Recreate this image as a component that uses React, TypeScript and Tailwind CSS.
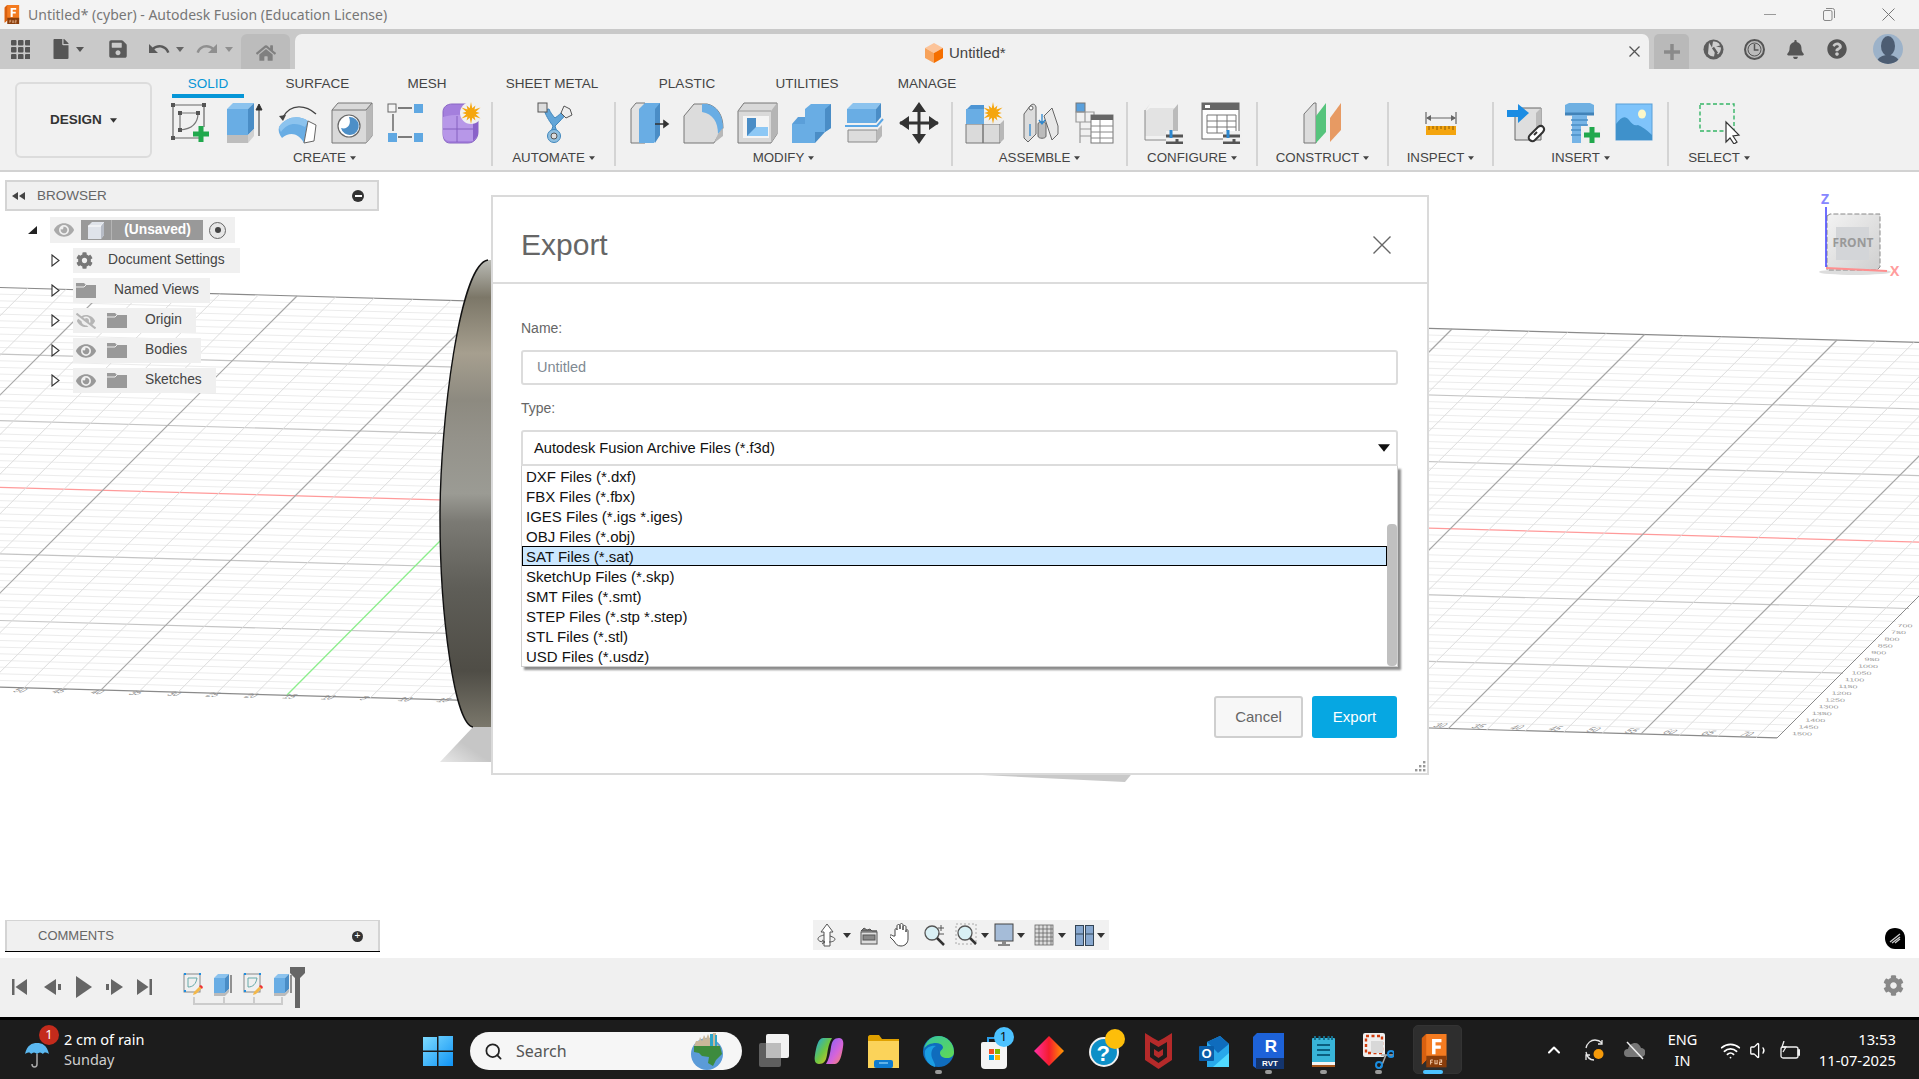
import { FaBell, FaCog, FaEye, FaEyeSlash, FaFile, FaHome, FaQuestionCircle, FaSave } from "react-icons/fa";
import { MdRedo, MdUndo } from "react-icons/md";
import { Search, Wifi, ChevronUp, Volume1 } from "lucide-react";
import type { ReactNode } from "react";

const Caret = ({ className = "" }: { className?: string }) => (
  <svg width="8" height="5" viewBox="0 0 8 5" className={className}>
    <path d="M0 0h8L4 5z" fill="currentColor" />
  </svg>
);

/* ---------- ribbon icons, all 44x42 ---------- */
const Ico = ({ children }: { children: ReactNode }) => (
  <svg width="44" height="42" viewBox="0 0 44 42">
    {children}
  </svg>
);

const Plus = ({ x, y }: { x: number; y: number }) => (
  <path d={`M${x} ${y - 8}v16M${x - 8} ${y}h16`} stroke="#21a84d" strokeWidth="5" fill="none" />
);

const SketchIcon = () => (
  <Ico>
    <path d="M5 3h31M5 3v33h26M36 3v22" stroke="#666" strokeWidth="1.2" fill="none" />
    <path d="M12 11h19M12 11v17M30 11c0 10-6 16-18 17" stroke="#777" strokeWidth="1.2" fill="none" />
    {[[3, 1], [34, 1], [3, 34], [10, 9], [10, 26], [28, 9]].map(([x, y]) => (
      <rect key={`${x}-${y}`} x={x} y={y} width="4" height="4" fill="#555" />
    ))}
    <Plus x={33} y={32} />
  </Ico>
);

const ExtrudeIcon = () => (
  <Ico>
    <path d="M5 7l6-6h21l-6 6z" fill="#8cc3ee" />
    <path d="M5 7h21v26H5z" fill="#69ade4" />
    <path d="M26 7l6-6v26l-6 6z" fill="#4a8dc6" />
    <path d="M5 33h21v8H5z" fill="#bdbdbd" />
    <path d="M26 33l6-6v7l-6 7z" fill="#d0d0d0" />
    <path d="M37 34V3M34 8l3-6 3 6z" stroke="#333" strokeWidth="1" fill="#333" />
  </Ico>
);

const RevolveIcon = () => (
  <Ico>
    <path d="M7 15C15 1 30 3 40 12" stroke="#444" strokeWidth="1.4" fill="none" />
    <path d="M3 14l7-1-3 6z" fill="#444" />
    <path d="M3 25c8-11 20-12 29-6l-4 22C22 30 13 30 6 36c-3-4-4-7-3-11z" fill="#69ade4" />
    <path d="M3 25c8-11 20-12 29-6l-3 6C20 20 11 21 5 30c-1-2-2-3-2-5z" fill="#8cc3ee" />
    <path d="M32 19l8 4-2 16-10 2z" fill="#fff" stroke="#666" strokeWidth="1" />
  </Ico>
);

const HoleIcon = () => (
  <Ico>
    <path d="M2 8l6-7h34v33l-6 7H2z" fill="#d9d9d9" stroke="#777" strokeWidth="1" />
    <path d="M36 8l6-7v33l-6 7z" fill="#b8b8b8" />
    <path d="M2 8h34l6-7" stroke="#777" fill="none" />
    <circle cx="19" cy="24" r="11" fill="#fff" stroke="#666" strokeWidth="1.2" />
    <path d="M19 15a9 9 0 1 1-8 11c6 2 11-3 8-11z" fill="#4d8fc7" />
  </Ico>
);

const PatternIcon = () => (
  <Ico>
    <path d="M14 6h14M14 35h14M9 12v17" stroke="#555" strokeWidth="1.3" />
    <rect x="4" y="2" width="8" height="8" fill="#f4f4f4" stroke="#666" />
    <rect x="30" y="2" width="9" height="9" fill="#60a8e2" />
    <rect x="4" y="31" width="9" height="9" fill="#60a8e2" />
    <rect x="30" y="31" width="9" height="9" fill="#60a8e2" />
  </Ico>
);

const Star = ({ x, y, r = 9 }: { x: number; y: number; r?: number }) => {
  const pts = Array.from({ length: 24 }, (_, i) => {
    const a = (i * Math.PI) / 12;
    const d = i % 2 === 0 ? (i % 4 === 0 ? r : r * 0.8) : r * 0.45;
    return `${x + d * Math.sin(a)},${y - d * Math.cos(a)}`;
  });
  return <polygon points={pts.join(" ")} fill="#f5a60f" />;
};

const FormIcon = () => (
  <Ico>
    <path d="M5 10c0-5 4-8 9-8h14c6 0 10 3 12 8v20c0 6-4 11-10 11H12C7 41 5 37 5 31z" fill="#a47fdd" stroke="#8a67c4" />
    <path d="M5 15c10-3 25-3 30 0v24H12c-5 0-7-3-7-7z" fill="#b797e8" />
    <path d="M5 27h30M19 14v26" stroke="#8560c0" strokeWidth="1" />
    <path d="M35 17l5-4v20l-5 6z" fill="#8a62c9" />
    <circle cx="33" cy="11" r="11" fill="#f1f1f1" />
    <Star x={33} y={11} r={11} />
  </Ico>
);

const AutomateIcon = () => (
  <Ico>
    <path d="M12 8c3 8 6 12 9 16l-3 9h8l-3-9c4-4 8-8 13-14l-4-2c-3 3-6 6-9 8-2-2-5-6-6-9z" fill="#62a5d8" stroke="#3f86bc" />
    <rect x="6" y="1" width="9" height="9" fill="#ddd" stroke="#555" />
    <path d="M32 4l6 3 2 6-6 3-5-5z" fill="#eee" stroke="#555" />
    <circle cx="22" cy="34" r="6.5" fill="#8fbfe0" stroke="#3f86bc" />
    <circle cx="22" cy="34" r="3" fill="#ddd" stroke="#555" />
  </Ico>
);

const PressPullIcon = () => (
  <Ico>
    <path d="M4 7l5-6h9v40H4z" fill="#e3e3e3" stroke="#777" />
    <path d="M12 7l6-6h15v32l-6 8H12z" fill="#69ade4" />
    <path d="M28 7l5-6v32l-5 8z" fill="#4a8dc6" />
    <path d="M28 22h12M37 19l4 3-4 3z" stroke="#333" strokeWidth="1.6" fill="#333" />
  </Ico>
);

const FilletIcon = () => (
  <Ico>
    <path d="M3 14L13 2h13c10 2 16 11 16 24L33 41H3z" fill="#dcdcdc" stroke="#777" />
    <path d="M21 2h5c10 2 16 11 16 24l-5 6C37 20 32 12 21 10z" fill="#69ade4" />
    <path d="M37 32l5-6v8l-9 7z" fill="#b8b8b8" />
  </Ico>
);

const ShellIcon = () => (
  <Ico>
    <path d="M3 9l6-8h33v31l-6 9H3z" fill="#d9d9d9" stroke="#777" />
    <path d="M36 9l6-8v31l-6 9z" fill="#b5b5b5" />
    <path d="M3 9h33" stroke="#999" />
    <path d="M8 14h26v22H8z" fill="#f4f4f4" />
    <path d="M12 16h9v18H12z" fill="#4a8dc6" />
    <path d="M12 34l9-9h12v9z" fill="#8dc8f5" />
  </Ico>
);

const CombineIcon = () => (
  <Ico>
    <path d="M3 22h23v19H3z" fill="#69ade4" />
    <path d="M3 22l6-7h11v7z" fill="#5b9fd9" />
    <path d="M16 7l6-5h20v24l-6 4H16z" fill="#69ade4" />
    <path d="M36 7l6-5v24l-6 4z" fill="#4a8dc6" />
    <path d="M26 30h10l-10 11z" fill="#4a8dc6" />
  </Ico>
);

const OffsetIcon = () => (
  <Ico>
    <path d="M4 7l6-6h28l-5 6z" fill="#8cc3ee" />
    <path d="M4 7h29v14H4z" fill="#69ade4" />
    <path d="M33 7l5-6v14l-5 6z" fill="#4a8dc6" />
    <path d="M2 24h32l6-7" stroke="#5aa7e6" strokeWidth="2" fill="none" />
    <path d="M5 28h29v12H5z" fill="#dcdcdc" stroke="#888" />
    <path d="M34 28l5-5v11l-5 6z" fill="#b8b8b8" />
  </Ico>
);

const MoveIcon = () => (
  <Ico>
    <path d="M22 4v34M3 21h38" stroke="#333" strokeWidth="3" />
    <path d="M22 0l7 10H15zM22 42l7-10H15zM2 21l10-7v14zM42 21l-10-7v14z" fill="#333" />
  </Ico>
);

const NewCompIcon = () => (
  <Ico>
    <path d="M3 8l5-5h13v16H3z" fill="#4d95d4" />
    <path d="M3 22h17v19H3zM20 22h17v19H20z" fill="#dadada" stroke="#777" />
    <path d="M20 22l4-4h17l-4 4z" fill="#eee" />
    <path d="M37 22l4-4v19l-4 4z" fill="#b8b8b8" />
    <path d="M3 7h18v15H3z" fill="#69ade4" />
    <Star x={30} y={11} r={11} />
  </Ico>
);

const JointIcon = () => (
  <Ico>
    <path d="M6 12l6-8c3-3 5-2 6 1v27l-8 8-4-4z" fill="#dcdcdc" stroke="#666" />
    <path d="M26 14l8-8 6 18v8l-6 6z" fill="#e8e8e8" stroke="#666" />
    <path d="M20 22c0-3 8-3 8 0v12c0 3-8 3-8 0z" fill="#bbb" stroke="#666" />
    <path d="M24 12v10M21 18l3 4 3-4M12 22v12" stroke="#2d88d0" strokeWidth="1.3" fill="none" />
    <circle cx="13" cy="6" r="2" fill="#fff" stroke="#666" />
  </Ico>
);

const TableIcon = () => (
  <Ico>
    <rect x="3" y="1" width="9" height="9" fill="#5aa0dc" stroke="#777" />
    <path d="M3 10h18v10H3zM12 10v10M7 20v21M7 27h11M7 34h11" stroke="#999" strokeWidth="1.2" fill="none" />
    <rect x="18" y="13" width="22" height="28" fill="#fff" stroke="#777" />
    <rect x="18" y="13" width="22" height="5" fill="#666" />
    <path d="M18 24h22M18 30h22M18 36h22M27 18v23" stroke="#888" />
  </Ico>
);

const Sliders = () => (
  <g>
    <path d="M24 34h17M24 41h17" stroke="#555" strokeWidth="3" />
    <path d="M29 28v8" stroke="#2d88d0" strokeWidth="3" />
    <path d="M35 37v5" stroke="#555" strokeWidth="3" />
  </g>
);

const ParamIcon = () => (
  <Ico>
    <path d="M3 8l5-6h28v32H3z" fill="#e3e3e3" />
    <path d="M8 2h28v4H8l-5 4z" fill="#f2f2f2" />
    <path d="M31 8l5-6v30h-5z" fill="#bbb" />
    <path d="M3 8v30h25" stroke="#888" fill="none" />
    <rect x="24" y="29" width="19" height="13" fill="#f0f0f0" />
    <Sliders />
  </Ico>
);

const ConfigTableIcon = () => (
  <Ico>
    <rect x="3" y="1" width="37" height="36" fill="#fff" stroke="#666" />
    <rect x="3" y="1" width="37" height="7" fill="#666" />
    <rect x="6" y="3" width="5" height="3" fill="#fff" />
    <path d="M8 13h29v18H8zM18 13v18M28 13v18M8 19h29M8 25h29" stroke="#777" fill="none" />
    <rect x="24" y="29" width="19" height="13" fill="#f0f0f0" />
    <Sliders />
  </Ico>
);

const PlaneIcon = () => (
  <Ico>
    <path d="M3 12L13 1h2v40H3z" fill="#dcdcdc" stroke="#777" />
    <path d="M15 14l10-13v29l-10 11z" fill="#56c47c" />
    <path d="M29 16l11-15v27l-11 12z" fill="#e79a63" />
  </Ico>
);

const MeasureIcon = () => (
  <Ico>
    <path d="M7 10v12M37 10v12M8 16h28" stroke="#666" strokeWidth="1.2" />
    <path d="M7 16l5-3v6zM37 16l-5-3v6z" fill="#666" />
    <rect x="7" y="24" width="30" height="9" fill="#f4a50f" />
    <path d="M10 24v4M14 24v3M18 24v4M22 24v3M26 24v4M30 24v3M34 24v4" stroke="#8a5b05" />
  </Ico>
);

const InsertDerivedIcon = () => (
  <Ico>
    <path d="M10 11l5-5h21v32H10z" fill="#dedede" stroke="#666" />
    <path d="M31 11l5-5v25l-5 3z" fill="#bbb" />
    <path d="M2 8h11V2l11 9-11 10v-6H2z" fill="#1b8ce3" />
    <path d="M25 33l8-8c4-3 8 1 5 5l-8 8c-3 3-9-1-5-5z" fill="#fff" stroke="#333" strokeWidth="2" />
    <path d="M32 30l-3 3" stroke="#333" strokeWidth="2" />
  </Ico>
);

const BoltIcon = () => (
  <Ico>
    <path d="M6 3l4-2h21l4 2v9H6z" fill="#6fb0e2" />
    <path d="M6 12h29" stroke="#4283b8" strokeWidth="3" />
    <path d="M13 13h15v28H13z" fill="#76b4e6" />
    <path d="M12 18h17M12 23h17M12 28h17M12 33h17" stroke="#4b8fc6" strokeWidth="1.6" />
    <rect x="22" y="24" width="20" height="18" fill="#f0f0f0" />
    <Plus x={33} y={33} />
  </Ico>
);

const CanvasIcon = () => (
  <Ico>
    <rect x="3" y="2" width="36" height="36" fill="#7fc4fb" stroke="#5aa0d8" />
    <path d="M3 38V22c5-7 9-9 13-4 3 4 5 6 9 5 4 2 8 4 14 10v5z" fill="#3f91cb" />
    <ellipse cx="29" cy="12" rx="4" ry="4.5" fill="#fdf8c9" />
  </Ico>
);

const SelectIcon = () => (
  <Ico>
    <rect x="3" y="2" width="34" height="27" fill="none" stroke="#35b566" strokeWidth="1.4" strokeDasharray="4 2.5" />
    <path d="M29 20v20l4-4 4 6 3-2-4-6 6-1z" fill="#fff" stroke="#333" strokeWidth="1.2" />
  </Ico>
);

/* ---------- ribbon ---------- */
const tabs = [
  { name: "SOLID", w: "w-[110px]", active: true },
  { name: "SURFACE", w: "w-[109px]" },
  { name: "MESH", w: "w-[110px]" },
  { name: "SHEET METAL", w: "w-[140px]" },
  { name: "PLASTIC", w: "w-[130px]" },
  { name: "UTILITIES", w: "w-[110px]" },
  { name: "MANAGE", w: "w-[130px]" },
];

const RibbonGroup = ({ label, width, last, cell = "w-[54px]", children }: { label: string; width: string; last?: boolean; cell?: string; children: ReactNode[] }) => (
  <div className={`${width} h-[64px] flex flex-col shrink-0 ${last ? "" : "border-r-2 border-[#d4d4d4]"}`}>
    <div className="h-[46px] flex justify-center">
      {children.map((c, i) => (
        <div key={i} className={`${cell} flex justify-center`}>
          {c}
        </div>
      ))}
    </div>
    <div className="h-[18px] pt-[2px] flex items-center justify-center gap-[4px] text-[13.3px] text-[#444] leading-none">
      {label}
      <Caret className="w-[6px] h-[4px] text-[#444]" />
    </div>
  </div>
);

const Ribbon = () => (
  <div className="h-[103px] shrink-0 bg-[#f1f1f1] border-b-2 border-[#d2d2d2] flex">
    <div className="w-[153px] pl-[15px] pt-[13px] shrink-0">
      <div className="w-[137px] h-[76px] border-2 border-[#dcdcdc] rounded-[6px] flex items-center justify-center gap-[8px] text-[13.5px] font-bold text-[#333]">
        DESIGN
        <Caret className="w-[7px] h-[5px] text-[#333]" />
      </div>
    </div>
    <div className="flex flex-col">
      <div className="h-[33px] flex">
        {tabs.map((t) => (
          <div key={t.name} className={`${t.w} flex flex-col items-center`}>
            <div className={`h-[25px] pt-[6px] text-[13.5px] leading-[18px] ${t.active ? "text-[#0696d7]" : "text-[#444]"}`}>{t.name}</div>
            {t.active && <div className="w-[72px] h-[4px] bg-[#0696d7]" />}
          </div>
        ))}
      </div>
      <div className="flex">
        <RibbonGroup label="CREATE" width="w-[340px] pl-[5px]">
          {[<SketchIcon />, <ExtrudeIcon />, <RevolveIcon />, <HoleIcon />, <PatternIcon />, <FormIcon />]}
        </RibbonGroup>
        <RibbonGroup label="AUTOMATE" width="w-[123px]">
          {[<AutomateIcon />]}
        </RibbonGroup>
        <RibbonGroup label="MODIFY" width="w-[337px]">
          {[<PressPullIcon />, <FilletIcon />, <ShellIcon />, <CombineIcon />, <OffsetIcon />, <MoveIcon />]}
        </RibbonGroup>
        <RibbonGroup label="ASSEMBLE" width="w-[175px]" cell="w-[55px]">
          {[<NewCompIcon />, <JointIcon />, <TableIcon />]}
        </RibbonGroup>
        <RibbonGroup label="CONFIGURE" width="w-[130px]" cell="w-[57px]">
          {[<ParamIcon />, <ConfigTableIcon />]}
        </RibbonGroup>
        <RibbonGroup label="CONSTRUCT" width="w-[131px]">
          {[<PlaneIcon />]}
        </RibbonGroup>
        <RibbonGroup label="INSPECT" width="w-[105px]">
          {[<MeasureIcon />]}
        </RibbonGroup>
        <RibbonGroup label="INSERT" width="w-[175px]">
          {[<InsertDerivedIcon />, <BoltIcon />, <CanvasIcon />]}
        </RibbonGroup>
        <RibbonGroup label="SELECT" width="w-[100px]" last>
          {[<SelectIcon />]}
        </RibbonGroup>
      </div>
    </div>
  </div>
);

/* ---------- title bar and doc tabs ---------- */
const FusionLogo = ({ size = 20 }: { size?: number }) => (
  <svg width={size} height={size * 1.15} viewBox="0 0 20 23">
    <path d="M2 3l3-3h14v18H5l-3 3z" fill="#f47b20" />
    <path d="M2 3l3-3v18l-3 3z" fill="#d9600f" />
    <path d="M5 15h14v8H5z" fill="#8a3d0a" />
    <path d="M9 3.5h6.5v2.2H11.4v2.2h3.6v2.2h-3.6V14H9z" fill="#fff" />
    <path d="M8 18h1.6M8 18v3M8 19.5h1.3M11 18v2.6h1.5V18M14 18h1.6v1.4h-1.4v1.6h1.6" stroke="#f3c9a6" strokeWidth=".7" fill="none" />
  </svg>
);

const TitleBar = () => (
  <div className="h-[29px] shrink-0 bg-[#f3f3f3] flex items-center pl-[3px] font-['Noto_Sans',sans-serif]">
    <FusionLogo size={17} />
    <span className="ml-[8px] text-[14px] text-[#777] whitespace-nowrap">Untitled* (cyber) - Autodesk Fusion (Education License)</span>
    <div className="ml-auto flex items-center text-[#888]">
      <div className="w-[58px] flex justify-center">
        <div className="w-[12px] h-px bg-[#999]" />
      </div>
      <div className="w-[60px] flex justify-center">
        <svg width="12" height="13" viewBox="0 0 12 13" fill="none" stroke="#888">
          <rect x=".5" y="2.5" width="8.5" height="10" rx="1.5" />
          <path d="M3 .5h6.5a2 2 0 0 1 2 2V10" />
        </svg>
      </div>
      <div className="w-[58px] flex justify-center">
        <svg width="13" height="13" viewBox="0 0 13 13" stroke="#777">
          <path d="M.5.5l12 12M12.5.5l-12 12" />
        </svg>
      </div>
      <div className="w-[2px]" />
    </div>
  </div>
);

const DocBand = () => (
  <div className="h-[40px] shrink-0 bg-[#c9c9c9] flex items-end relative">
    <div className="w-[241px] h-[40px] flex items-center text-[#666] shrink-0">
      <div className="w-[40px] flex justify-center">
        <svg width="19" height="19" viewBox="0 0 19 19" fill="#555">
          {[0, 7, 14].flatMap((x) => [0, 7, 14].map((y) => <rect key={`${x}${y}`} x={x} y={y} width="5.5" height="5.5" rx="1" />))}
        </svg>
      </div>
      <div className="w-[26px] flex justify-center ml-[8px]">
        <FaFile className="text-[20px] text-[#555]" />
      </div>
      <Caret className="text-[#555] ml-[2px]" />
      <div className="w-[38px] flex justify-center ml-[14.5px]">
        <FaSave className="text-[20px] text-[#5a5a5a]" />
      </div>
      <div className="w-[26px] flex justify-center ml-[9.5px]">
        <MdUndo className="text-[24px] text-[#5a5a5a]" />
      </div>
      <Caret className="text-[#666] ml-[4px]" />
      <div className="w-[26px] flex justify-center ml-[10px]">
        <MdRedo className="text-[24px] text-[#8f8f8f]" />
      </div>
      <Caret className="text-[#8f8f8f] ml-[4.600px]" />
    </div>
    <div className="w-[49px] h-[35px] bg-[#bcbcbc] rounded-t-[6px] flex items-center justify-center shrink-0">
      <FaHome className="text-[20px] text-[#808080] mt-[2px]" />
    </div>
    <div className="w-[5px] shrink-0" />
    <div className="w-[1354px] h-[35px] bg-[#f1f1f1] rounded-t-[7px] flex items-center shrink-0 relative">
      <div className="absolute left-[630px] top-[8px] flex items-center gap-[6px] text-[15px] text-[#444] font-['Liberation_Sans',sans-serif]">
        <svg width="18" height="20" viewBox="0 0 18 20">
          <path d="M9 0l9 5-9 5-9-5z" fill="#fcc49a" />
          <path d="M0 5l9 5v10l-9-5z" fill="#f7a25a" />
          <path d="M18 5l-9 5v10l9-5z" fill="#f56f00" />
        </svg>
        Untitled*
      </div>
      <svg width="11" height="11" viewBox="0 0 11 11" stroke="#555" strokeWidth="1.3" className="ml-auto mr-[9px]">
        <path d="M.5.5l10 10M10.5.5l-10 10" />
      </svg>
    </div>
    <div className="w-[5px] shrink-0" />
    <div className="w-[35px] h-[35px] bg-[#b9b9b9] rounded-t-[5px] flex items-center justify-center shrink-0">
      <svg width="16" height="16" viewBox="0 0 16 16">
        <path d="M8 0v16M0 8h16" stroke="#8a8a8a" strokeWidth="3.5" />
      </svg>
    </div>
    <div className="h-[40px] flex items-center text-[#555] shrink-0">
      <div className="w-[48px] flex justify-center">
        <svg width="21" height="21" viewBox="0 0 21 21">
          <circle cx="10.5" cy="10.5" r="10" fill="#5e5e5e" />
          <path d="M6 3.500l3 5 1-6c4 0 6 1 7 4l-4 1 5 1c0 3-1 5-3 7l-3-3-1 5c-3 0-5-1-6-3z" fill="#cdcdcd" />
          <path d="M10 8.500l4 6" stroke="#5e5e5e" strokeWidth="2.500" />
        </svg>
      </div>
      <div className="w-[35px] flex justify-center">
        <svg width="21" height="21" viewBox="0 0 21 21" fill="none">
          <circle cx="10.5" cy="10.5" r="9.5" fill="#bbb" stroke="#555" strokeWidth="2" />
          <circle cx="10.5" cy="10.5" r="6.5" stroke="#555" />
          <path d="M10.5 5v6h4" stroke="#555" strokeWidth="1.5" />
        </svg>
      </div>
      <div className="w-[47px] flex justify-center">
        <FaBell className="text-[19px] text-[#555]" />
      </div>
      <div className="w-[36px] flex justify-center">
        <FaQuestionCircle className="text-[20px] text-[#555]" />
      </div>
      <div className="ml-[18px] w-[30px] h-[30px] rounded-full bg-[#9cb2c9] overflow-hidden flex justify-center">
        <svg width="30" height="30" viewBox="0 0 30 30">
          <ellipse cx="15" cy="12" rx="7" ry="10" fill="#4d5d72" />
          <path d="M3 30c1-7 7-9 12-9s11 2 12 9z" fill="#4d5d72" />
        </svg>
      </div>
    </div>
  </div>
);

/* ---------- 3d scene ---------- */
const back = (x: number) => 287.5 + 0.0286 * x;
const rows = Array.from({ length: 61 }, (_, i) => i);
const diagonals = Array.from({ length: 56 }, (_, k) => 27.5 + k * 38.5);

const Scene = () => (
  <svg className="absolute inset-0" width="1919" height="786" viewBox="0 172 1919 786">
    <defs>
      <linearGradient id="cyl" x1="0" y1="0" x2="0" y2="1">
        <stop offset="0" stopColor="#b9bab4" />
        <stop offset="0.08" stopColor="#7c7768" />
        <stop offset="0.2" stopColor="#a69f8f" />
        <stop offset="0.3" stopColor="#8d8a80" />
        <stop offset="0.38" stopColor="#94928a" />
        <stop offset="0.5" stopColor="#9b9b94" />
        <stop offset="0.56" stopColor="#7b7a74" />
        <stop offset="0.7" stopColor="#5f5e58" />
        <stop offset="0.88" stopColor="#4f4d46" />
        <stop offset="1" stopColor="#7a776b" />
      </linearGradient>
      <linearGradient id="shadow" x1="0" y1="1" x2="1" y2="0">
        <stop offset="0" stopColor="#e8e8e8" />
        <stop offset="0.5" stopColor="#c6c6c6" />
      </linearGradient>
    </defs>
    {rows.map((i) => {
      const major = i % 10 === 0;
      const y0 = back(-20) + i * 6.66;
      const xr = 1777 + (60 - i) * 6.6;
      const edge = i === 0 || i === 60;
      return (
        <line
          key={`h${i}`}
          x1={-20}
          y1={y0}
          x2={xr}
          y2={back(xr) + i * 6.66}
          stroke={edge ? "#8a8a8a" : major ? (i === 30 ? "#ff9a9a" : "#c4c4c4") : "#ececec"}
          strokeWidth={edge || major ? 1.2 : 1}
        />
      );
    })}
    {diagonals.map((xb, k) => {
      const major = (k + 3) % 5 === 0;
      return (
        <line
          key={`d${k}`}
          x1={xb}
          y1={back(xb)}
          x2={xb - 388.9}
          y2={back(xb) + 388.9}
          stroke={xb === 682 ? "none" : major ? "#a6a6a6" : "#dcdcdc"}
          strokeWidth={major ? 1.2 : 1}
        />
      );
    })}
    <line x1={1777} y1={738} x2={2166} y2={349} stroke="#8a8a8a" />
    <line x1={287} y1={695} x2={441} y2={540} stroke="#8cee8c" strokeWidth="1.3" />
    {[50, 45, 40, 35, 30, 25, 20, 15, 10, 5, 10, 15, 20].map((n, i) => (
      <text key={`l${i}`} transform={`matrix(1,0.03,-0.9,0.6,${12 + i * 38.5},${692 + i * 0.9})`} fontSize="10" fill="#8c8c8c" fontFamily="Liberation Sans">
        {n}
      </text>
    ))}
    {[30, 35, 40, 45, 50, 55, 60, 65, 70].map((n) => (
      <text key={`r${n}`} transform={`matrix(1,0.03,-0.9,0.6,${1432 + ((n - 30) / 5) * 38.3},${727 + ((n - 30) / 5) * 1.1})`} fontSize="10" fill="#8c8c8c" fontFamily="Liberation Sans">
        {n}
      </text>
    ))}
    {rows.slice(0, 17).map((i) => (
      <text key={`e${i}`} transform={`matrix(1,0.03,0,0.5,${1792 + i * 6.6},${735 - i * 6.75})`} fontSize="9" fill="#999" fontFamily="Liberation Sans">
        {1500 - i * 50}
      </text>
    ))}
    <polygon points="440,762 473,727 491,727 491,762" fill="url(#shadow)" />
    <polygon points="880,770 1135,770 1125,782" fill="#c9c9c9" />
    <path d="M495 260h-7C460 264 440 420 440 518c0 100 15 207 33 209h22z" fill="url(#cyl)" />
    <path d="M488 260C460 264 440 420 440 518c0 100 15 207 33 209" fill="none" stroke="#111" strokeWidth="1.4" />
  </svg>
);

const ViewCube = () => (
  <svg className="absolute left-[1810px] top-[16px]" width="100" height="100" viewBox="1810 188 100 100">
    <defs>
      <linearGradient id="cube" x1="0" y1="0" x2="1" y2="1">
        <stop offset="0" stopColor="#f3f3f3" />
        <stop offset="1" stopColor="#cfcfcf" />
      </linearGradient>
    </defs>
    <ellipse cx="1855" cy="272" rx="36" ry="3" fill="#ddd" />
    <path d="M1827 216l3-2h50v53l-3 3h-50z" fill="url(#cube)" stroke="#888" strokeDasharray="5 2" />
    <rect x="1836" y="227" width="33" height="33" fill="#d3d5d8" />
    <text x="1853" y="247" textAnchor="middle" fontSize="12" fontWeight="bold" fill="#999" fontFamily="Open Sans">
      FRONT
    </text>
    <path d="M1826 207v60" stroke="#4a4aff" strokeWidth="1.6" />
    <path d="M1826 268l61 3" stroke="#ff8f8f" strokeWidth="1.8" />
    <text x="1821" y="204" fontSize="14" fontWeight="bold" fill="#8787ff" fontFamily="Open Sans">
      Z
    </text>
    <text x="1890" y="276" fontSize="14" fontWeight="bold" fill="#ff9d9d" fontFamily="Open Sans">
      X
    </text>
  </svg>
);

/* ---------- browser panel ---------- */
const Folder = () => (
  <svg width="20" height="15" viewBox="0 0 20 15" className="shrink-0">
    <path d="M0 0h8l2 2h10v13H0z" fill="#999" />
    <path d="M10 2L8 4H0" stroke="#eee" fill="none" />
  </svg>
);

const Expand = () => (
  <svg width="9" height="13" viewBox="0 0 9 13" className="shrink-0">
    <path d="M1 1l7 5.5L1 12z" fill="#fff" stroke="#333" strokeWidth="1.1" />
  </svg>
);

const treeRows = [
  { label: "Document Settings", w: "w-[167px]", lead: <FaCog className="text-[17px] text-[#777] mr-[15px] shrink-0" /> },
  { label: "Named Views", w: "w-[137px]", lead: <div className="mr-[18px] shrink-0"><Folder /></div> },
  { label: "Origin", w: "w-[123px]", eye: "off" },
  { label: "Bodies", w: "w-[128px]", eye: "on" },
  { label: "Sketches", w: "w-[143px]", eye: "on" },
];

const BrowserPanel = () => (
  <div className="absolute left-[5px] top-[8px] w-[374px]">
    <div className="h-[31px] bg-[#f0f0f0] border-2 border-[#d4d4d4] flex items-center pl-[5px] pr-[13px] text-[13.5px] text-[#666]">
      <svg width="13" height="8" viewBox="0 0 13 8" fill="#444">
        <path d="M6 0v8L0 4zM13 0v8L7 4z" />
      </svg>
      <span className="ml-[12px] pt-[1px]">BROWSER</span>
      <div className="ml-auto w-[12px] h-[12px] rounded-full bg-[#333] flex items-center justify-center">
        <div className="w-[7px] h-[2px] bg-white" />
      </div>
    </div>
    <div className="ml-[23px] mt-[6px] h-[26px] flex items-center">
      <svg width="9" height="8" viewBox="0 0 9 8" className="shrink-0">
        <path d="M9 0v8H0z" fill="#222" />
      </svg>
      <div className="ml-[13px] w-[185px] h-[26px] bg-[#f0f0f0] flex items-center">
        <FaEye className="ml-[4px] text-[20px] text-[#aaa]" />
        <div className="ml-[7px] w-[122px] h-[20px] bg-[#999] flex items-center">
          <div className="w-[31px] h-[20px] border-r border-[#b4b4b4] flex justify-center items-center">
            <svg width="16" height="17" viewBox="0 0 16 17">
              <path d="M4 0h12v13l-3 4H0V4z" fill="#dfe3ea" />
              <path d="M0 4h13l3-4" stroke="#fff" fill="none" />
              <path d="M13 4l3-4v13l-3 4z" fill="#b7bcc6" />
            </svg>
          </div>
          <span className="flex-1 text-center text-[13.8px] font-bold text-white">(Unsaved)</span>
        </div>
        <div className="ml-[6px] w-[17px] h-[17px] rounded-full border border-[#666] bg-[#e6e6e6] flex items-center justify-center">
          <div className="w-[6px] h-[6px] rounded-full bg-[#444]" />
        </div>
      </div>
    </div>
    <div className="mt-[5px] flex flex-col gap-[5px]">
      {treeRows.map((r) => (
        <div key={r.label} className="h-[25px] ml-[46px] flex items-center">
          <Expand />
          <div className={`${r.w} ml-[13px] h-[25px] bg-[#f0f0f0] flex items-center pl-[3px] text-[13.8px] text-[#444] shrink-0`}>
            {r.eye ? (
              <>
                {r.eye === "on" ? <FaEye className="text-[20px] text-[#999] shrink-0" /> : <FaEyeSlash className="text-[20px] text-[#b5b5b5] shrink-0" />}
                <div className="ml-[11px] mr-[18px] shrink-0">
                  <Folder />
                </div>
              </>
            ) : (
              r.lead
            )}
            {r.label}
          </div>
        </div>
      ))}
    </div>
  </div>
);

/* ---------- export dialog ---------- */
const fileTypes = [
  "DXF Files (*.dxf)",
  "FBX Files (*.fbx)",
  "IGES Files (*.igs *.iges)",
  "OBJ Files (*.obj)",
  "SAT Files (*.sat)",
  "SketchUp Files (*.skp)",
  "SMT Files (*.smt)",
  "STEP Files (*.stp *.step)",
  "STL Files (*.stl)",
  "USD Files (*.usdz)",
];

const ExportDialog = () => (
  <div className="absolute left-[491px] top-[23px] w-[938px] h-[580px] bg-white border-2 border-[#dadada] flex flex-col">
    <div className="h-[87px] shrink-0 border-b-2 border-[#dcdcdc] flex items-center pt-[10px] pl-[28px] pr-[36px]">
      <span className="text-[30px] text-[#666] leading-none">Export</span>
      <svg width="18" height="18" viewBox="0 0 18 18" stroke="#666" strokeWidth="1.4" className="ml-auto">
        <path d="M.5.5l17 17M17.5.5l-17 17" />
      </svg>
    </div>
    <div className="pl-[28px] pr-[29px] flex flex-col relative flex-1">
      <label className="mt-[36px] h-[16px] leading-[16px] text-[14px] text-[#666]">Name:</label>
      <div className="mt-[14px] h-[35px] border-2 border-[#dcdcdc] rounded-[3px] flex items-center pl-[14px] text-[14.5px] text-[#7f8a93]">Untitled</div>
      <label className="mt-[15px] h-[16px] leading-[16px] text-[14px] text-[#666]">Type:</label>
      <div className="mt-[14px] h-[36px] border-2 border-[#dcdcdc] rounded-t-[3px] flex items-center pl-[11px] pr-[6px] text-[14.7px] text-[#111]">
        Autodesk Fusion Archive Files (*.f3d)
        <Caret className="ml-auto w-[12px] h-[8px] text-[#111]" />
      </div>
      <div className="h-[201px] bg-white border-x border-b border-[#cfcfcf] shadow-[3px_3px_2px_rgba(0,0,0,0.45)] flex">
        <div className="flex-1">
          {fileTypes.map((f) => (
            <div
              key={f}
              className={
                f.startsWith("SAT")
                  ? "h-[20px] bg-[#cce8ff] border border-black pl-[3px] flex items-center text-[15px] text-[#111] leading-none"
                  : "h-[20px] pl-[4px] flex items-center text-[15px] text-[#111] leading-none"
              }
            >
              {f}
            </div>
          ))}
        </div>
        <div className="w-[10px] pt-[58px]">
          <div className="h-full w-[10px] bg-[#c0c0c0] rounded-[4px]" />
        </div>
      </div>
      <div className="mt-[29px] flex justify-end gap-[9px] pr-px text-[15px]">
        <div className="w-[89px] h-[42px] bg-[#f7f7f7] border-2 border-[#cfcfcf] rounded-[3px] flex items-center justify-center text-[#666]">Cancel</div>
        <div className="w-[85px] h-[42px] bg-[#06a7e2] rounded-[3px] flex items-center justify-center text-white">Export</div>
      </div>
      <svg width="11" height="11" viewBox="0 0 11 11" fill="#999" className="absolute right-[1px] bottom-[1px]">
        {[[8, 0], [4, 4], [8, 4], [0, 8], [4, 8], [8, 8]].map(([x, y]) => (
          <rect key={`${x}${y}`} x={x} y={y} width="2.4" height="2.4" />
        ))}
      </svg>
    </div>
  </div>
);

/* ---------- nav bar ---------- */
const NavBar = () => (
  <div className="absolute left-[813px] top-[748px] w-[296px] h-[30px] bg-[#f1f1f1] flex items-center pl-[4px]">
    <svg width="20" height="24" viewBox="0 0 20 24" fill="none" stroke="#555">
      <path d="M10 1l6 8h-3v14H7V9H4z" fill="#fff" />
      <path d="M7 12c-4 1-6 2-6 4s3 3 7 3M13 13c3 1 5 2 5 3 0 2-3 3-6 3M5 17l3 2-3 2" />
    </svg>
    <Caret className="ml-[6px] text-[#333]" />
    <svg width="20" height="20" viewBox="0 0 20 20" className="ml-[8px]" fill="none" stroke="#555">
      <rect x="2" y="7" width="16" height="12" fill="#ddd" />
      <rect x="4" y="10" width="12" height="5" fill="#888" />
      <path d="M2 6l3-3 3 2 3-1 2 2h5z" fill="#777" />
    </svg>
    <svg width="22" height="24" viewBox="0 0 22 24" className="ml-[11px]" fill="#fff" stroke="#444">
      <path d="M5 13V7c0-2 2-2 2 0V3c0-2 3-2 3 0v3-4c0-2 3-2 3 0v5V4c0-2 3-2 3 0v5-1c0-2 2-2 2 0v8c0 4-3 7-7 7-4 0-5-2-7-5l-4-4c-1-2 1-3 3-1z" />
    </svg>
    <svg width="23" height="23" viewBox="0 0 23 23" className="ml-[11px]" fill="none">
      <circle cx="9" cy="9" r="7" fill="#d9f0f5" stroke="#555" strokeWidth="1.3" />
      <path d="M14 14l7 7" stroke="#333" strokeWidth="2.5" />
      <path d="M18 1v6M15 4h6M15 10h6" stroke="#555" />
    </svg>
    <svg width="22" height="24" viewBox="0 0 22 24" className="ml-[9px]" fill="none">
      <rect x="1" y="1" width="20" height="20" stroke="#aaa" strokeDasharray="2 2" />
      <circle cx="10" cy="10" r="7" fill="#d9f0f5" stroke="#555" strokeWidth="1.3" />
      <path d="M15 15l6 6" stroke="#333" strokeWidth="2.5" />
    </svg>
    <Caret className="ml-[4px] text-[#333]" />
    <svg width="20" height="24" viewBox="0 0 20 24" className="ml-[5px]">
      <rect x="1" y="1" width="18" height="17" fill="#a5bcd8" stroke="#444" />
      <rect x="8" y="18" width="4" height="3" fill="#888" />
      <rect x="4" y="21" width="12" height="2" fill="#888" />
    </svg>
    <Caret className="ml-[3px] text-[#333]" />
    <svg width="20" height="22" viewBox="0 0 20 22" className="ml-[9px]" stroke="#666" strokeWidth=".8" fill="#ddd">
      <rect x="1" y="1" width="18" height="20" />
      <path d="M1 5h18M1 9h18M1 13h18M1 17h18M5 1v20M9 1v20M13 1v20M17 1v20" fill="none" />
    </svg>
    <Caret className="ml-[4px] text-[#333]" />
    <svg width="19" height="21" viewBox="0 0 19 21" className="ml-[9px]" fill="#88a8cf" stroke="#345">
      <rect x=".5" y=".5" width="8" height="20" />
      <rect x="10.5" y=".5" width="8" height="20" />
      <path d="M10 9h9M1 9h8" />
    </svg>
    <Caret className="ml-[3px] text-[#333]" />
  </div>
);

/* ---------- timeline ---------- */
const MiniCube = () => (
  <svg width="20" height="24" viewBox="0 0 20 24">
    <path d="M1 5l4-4h11l-4 4z" fill="#8cc3ee" />
    <path d="M1 5h11v15H1z" fill="#69ade4" />
    <path d="M12 5l4-4v15l-4 4z" fill="#4a8dc6" />
    <path d="M1 20h11l4-4v3l-4 4H1z" fill="#bbb" />
    <path d="M18 20V2" stroke="#333" />
  </svg>
);

const MiniSketch = () => (
  <svg width="20" height="24" viewBox="0 0 20 24" fill="none">
    <rect x="1" y="1" width="16" height="18" stroke="#888" />
    <path d="M5 5h9M5 5v9c5 0 8-3 9-9" stroke="#6aa" />
    <path d="M1 1h2M16 1h2M1 18h2" stroke="#1f8ee0" strokeWidth="2" />
    <path d="M10 22l1-3 6-6 2 2-6 6z" fill="#f4b84a" />
    <path d="M16 13l2-1 2 2-1 2z" fill="#e33" />
  </svg>
);

const Timeline = () => (
  <div className="h-[59px] shrink-0 bg-[#f0f0f0] flex relative">
    <div className="flex items-center w-[160px] shrink-0 text-[#666] pl-[12px] pb-[2px]">
      <svg width="15" height="16" viewBox="0 0 15 16" fill="currentColor">
        <path d="M0 0h2.5v16H0zM15 0v16L3.5 8z" />
      </svg>
      <svg width="17" height="16" viewBox="0 0 17 16" fill="currentColor" className="ml-[17px]">
        <path d="M12 0v16L0 8zM14 5h3v6h-3z" />
      </svg>
      <svg width="16" height="22" viewBox="0 0 16 22" fill="currentColor" className="ml-[15px]">
        <path d="M0 0l16 11L0 22z" />
      </svg>
      <svg width="17" height="16" viewBox="0 0 17 16" fill="currentColor" className="ml-[14px]">
        <path d="M5 0v16l12-8zM0 5h3v6H0z" />
      </svg>
      <svg width="15" height="16" viewBox="0 0 15 16" fill="currentColor" className="ml-[14px]">
        <path d="M0 0v16l11.5-8zM12.5 0H15v16h-2.5z" />
      </svg>
    </div>
    <div className="ml-[23px] flex flex-col">
      <div className="mt-[15px] flex gap-[10px]">
        <MiniSketch />
        <MiniCube />
        <MiniSketch />
        <MiniCube />
      </div>
      <div className="ml-[10px] w-[90px] h-[8px] border-x-2 border-b-2 border-[#ccc] relative">
        <div className="absolute left-[28px] top-0 w-[2px] h-[8px] bg-[#ccc]" />
        <div className="absolute left-[58px] top-0 w-[2px] h-[8px] bg-[#ccc]" />
      </div>
    </div>
    <svg width="15" height="41" viewBox="0 0 15 41" className="absolute left-[290px] top-[9px]">
      <path d="M0 0h15v6l-5 5v30H5V11L0 6z" fill="#666" />
    </svg>
    <FaCog className="absolute left-[1883px] top-[17px] text-[21px] text-[#888]" />
  </div>
);

/* ---------- taskbar ---------- */
const WinLogo = () => (
  <svg width="30" height="30" viewBox="0 0 30 30">
    <defs>
      <linearGradient id="win" x1="0" y1="0" x2="1" y2="1">
        <stop offset="0" stopColor="#7fdcff" />
        <stop offset="1" stopColor="#0f93f5" />
      </linearGradient>
    </defs>
    <path d="M0 1h14v13.5H0zM15.5 0H30v14.5H15.5zM0 16h14v14H0zM15.5 16H30v14H15.5z" fill="url(#win)" />
  </svg>
);

const Globe = () => (
  <svg width="36" height="38" viewBox="0 0 36 38" className="ml-auto mr-[17px]">
    <circle cx="18" cy="22" r="16" fill="#5b9bd8" />
    <path d="M5 14h26l2 8-6 6-3 6-5-3 1-6-7-1-3-3-5-1z" fill="#3d8b3d" />
    <path d="M5 14l2-5h3l1-4 2 4 2-6 2 4 2-5 2 5 2-3 1-3h3v10l3 3H5z" fill="#c9b79a" />
    <path d="M21 2h3v12h-3zM26 3h2v11h-2z" fill="#2fa5c9" />
  </svg>
);

const Cell = ({ children, dot, active }: { children: ReactNode; dot?: boolean; active?: boolean }) => (
  <div className="w-[55px] h-full relative flex items-center justify-center pt-[3px]">
    {children}
    {dot && <div className="absolute left-[24px] top-[50px] w-[7px] h-[4px] rounded-full bg-[#9a9a9a]" />}
    {active && <div className="absolute left-[17px] top-[50px] w-[20px] h-[4px] rounded-full bg-[#4cc2ff]" />}
  </div>
);

const appIcons = [
  {
    key: "view",
    node: (
      <svg width="30" height="34" viewBox="0 0 30 34">
        <rect x="0" y="9" width="22" height="24" rx="2" fill="#5f5f5f" />
        <rect x="7" y="0" width="23" height="24" rx="2" fill="#f2f2f2" />
        <rect x="7" y="9" width="15" height="15" fill="#bdbdbd" />
      </svg>
    ),
  },
  {
    key: "copilot",
    node: (
      <svg width="30" height="30" viewBox="0 0 30 30">
        <defs>
          <linearGradient id="cpA" x1="0" y1="0" x2="1" y2="1">
            <stop offset="0" stopColor="#1aa7e8" />
            <stop offset=".5" stopColor="#6cc644" />
            <stop offset="1" stopColor="#f6c21c" />
          </linearGradient>
          <linearGradient id="cpB" x1="0" y1="0" x2="1" y2="1">
            <stop offset="0" stopColor="#7b61ff" />
            <stop offset=".6" stopColor="#d764d8" />
            <stop offset="1" stopColor="#f98a5a" />
          </linearGradient>
        </defs>
        <path d="M9 2h9c-3 5-4 10-5 17-1 6-3 9-8 9-4 0-5-4-4-9C2 12 4 2 9 2z" fill="url(#cpA)" />
        <path d="M21 28h-9c3-5 4-10 5-17 1-6 3-9 8-9 4 0 5 4 4 9-1 7-3 17-8 17z" fill="url(#cpB)" />
      </svg>
    ),
  },
  {
    key: "files",
    node: (
      <svg width="31" height="33" viewBox="0 0 31 33">
        <path d="M0 2c0-1 1-2 2-2h9l3 4h17v4H0z" fill="#e0a100" />
        <path d="M0 6h31v27H0z" fill="#fbd35a" />
        <rect x="6" y="25" width="19" height="8" rx="2" fill="#0f7bd0" />
        <path d="M11 28h9" stroke="#7cc4f2" strokeWidth="1.5" />
      </svg>
    ),
  },
  {
    key: "edge",
    dot: true,
    node: (
      <svg width="31" height="31" viewBox="0 0 31 31">
        <defs>
          <linearGradient id="edgeA" x1="0" y1="0" x2="1" y2="1">
            <stop offset="0" stopColor="#36c5a0" />
            <stop offset="1" stopColor="#61d951" />
          </linearGradient>
        </defs>
        <circle cx="15.5" cy="15.5" r="15.5" fill="#0f6cbd" />
        <path d="M1 13C3 4 9 0 15.5 0 24 0 31 7 31 16c0 4-3 6-7 6-4 0-7-2-7-5 0-3 3-3 3-6-1-3-4-4-7-4C8 7 3 9 1 13z" fill="url(#edgeA)" />
        <path d="M12 31C5 29 1 22 2 15c1-3 6-6 11-5-5 2-6 9-3 14 1 3 3 5 2 7z" fill="#1b9de2" />
      </svg>
    ),
  },
  {
    key: "store",
    node: (
      <div className="relative w-[30px] h-[36px]">
        <svg width="30" height="36" viewBox="0 0 30 36">
          <path d="M2 11a2 2 0 0 1 2-2h22a2 2 0 0 1 2 2v21a4 4 0 0 1-4 4H6a4 4 0 0 1-4-4z" fill="#f4f4f4" />
          <path d="M9 9V5h14v4" stroke="#2a9de8" strokeWidth="2" fill="none" />
          <rect x="10" y="16" width="5" height="5" fill="#f25022" />
          <rect x="16" y="16" width="5" height="5" fill="#7fba00" />
          <rect x="10" y="22" width="5" height="5" fill="#00a4ef" />
          <rect x="16" y="22" width="5" height="5" fill="#ffb900" />
        </svg>
        <div className="absolute -top-[6px] left-[15px] w-[20px] h-[20px] rounded-full bg-[#4cc2ff] text-[#111] text-[13px] flex items-center justify-center">1</div>
      </div>
    ),
  },
  {
    key: "diamond",
    node: (
      <svg width="30" height="30" viewBox="0 0 30 30">
        <defs>
          <linearGradient id="dia" x1="0" y1="0" x2="1" y2="0">
            <stop offset="0" stopColor="#ff2fa5" />
            <stop offset=".5" stopColor="#f51c2e" />
            <stop offset="1" stopColor="#ff9a00" />
          </linearGradient>
        </defs>
        <path d="M15 0l15 15-15 15L0 15z" fill="url(#dia)" />
      </svg>
    ),
  },
  {
    key: "help",
    node: (
      <div className="relative">
        <svg width="30" height="31" viewBox="0 0 30 31">
          <circle cx="15" cy="16" r="14" fill="#0d8fc7" stroke="#f0f0f0" strokeWidth="2" />
        </svg>
        <span className="absolute left-[8px] top-[1px] text-[22px] font-bold text-white font-['Liberation_Sans',sans-serif]">?</span>
        <div className="absolute -top-[7px] left-[16px] w-[20px] h-[20px] rounded-full bg-[#fdbe0a]" />
      </div>
    ),
  },
  {
    key: "mcafee",
    node: (
      <svg width="27" height="36" viewBox="0 0 27 36">
        <path d="M0 0l8 5 5.500 3 5.500-3 8-5v27L13.500 36 0 27z" fill="#b52a2a" />
        <path d="M5 9l8.500 5L22 9v15l-8.500 6L5 24z" fill="#1d1d1d" />
        <path d="M9 16l4.500 3 4.500-3v6l-4.500 3L9 22z" fill="#b52a2a" />
      </svg>
    ),
  },
  {
    key: "outlook",
    node: (
      <svg width="30" height="31" viewBox="0 0 30 31">
        <path d="M8 6l13-6 9 8v23H8z" fill="#28a8ea" />
        <path d="M8 6l13-6 9 8-11 9z" fill="#0f6cbd" />
        <path d="M14 31l16-14v14z" fill="#50d9ff" />
        <rect x="0" y="10" width="15" height="15" rx="1" fill="#0a5da8" />
        <text x="7.500" y="22" textAnchor="middle" fontSize="13" fontWeight="bold" fill="#fff" fontFamily="Liberation Sans">
          O
        </text>
      </svg>
    ),
  },
  {
    key: "revit",
    dot: true,
    node: (
      <svg width="31" height="36" viewBox="0 0 31 36">
        <path d="M0 4l4-4h27v36H4l-4-3z" fill="#1d62d8" />
        <path d="M3 25h28v11H3z" fill="#14356e" />
        <text x="18" y="19" textAnchor="middle" fontSize="17" fontWeight="bold" fill="#fff" fontFamily="Liberation Sans">
          R
        </text>
        <text x="17" y="33" textAnchor="middle" fontSize="8" fontWeight="bold" fill="#fff" fontFamily="Liberation Sans">
          RVT
        </text>
      </svg>
    ),
  },
  {
    key: "notepad",
    dot: true,
    node: (
      <svg width="23" height="31" viewBox="0 0 23 31">
        <rect x="0" y="2" width="23" height="27" rx="1" fill="#38b5d9" />
        <rect x="0" y="26" width="23" height="5" fill="#f4f4f4" />
        <rect x="0" y="29" width="23" height="2" fill="#a5561c" />
        <path d="M3 0v4M7.500 0v4M12 0v4M16.500 0v4M20 0v4" stroke="#156f8d" strokeWidth="2" />
        <path d="M5 9h13M5 14h13M5 19h13" stroke="#0b5f80" strokeWidth="2" />
      </svg>
    ),
  },
  {
    key: "snip",
    dot: true,
    node: (
      <svg width="31" height="36" viewBox="0 0 31 36">
        <rect x="0" y="0" width="22" height="24" rx="2" fill="#efefef" />
        <rect x="3" y="3" width="16" height="17" fill="none" stroke="#d13d0e" strokeWidth="2.4" strokeDasharray="3 2.500" />
        <path d="M8 8h12v12H8z" fill="#d8d8d8" />
        <path d="M18 22h12M17 35c2-2 3-6 6-13" stroke="#aaa" strokeWidth="1.500" fill="none" />
        <circle cx="28" cy="21" r="3" fill="none" stroke="#1a8de0" strokeWidth="2" />
        <circle cx="16" cy="32" r="3" fill="none" stroke="#1a8de0" strokeWidth="2" />
      </svg>
    ),
  },
];

const Taskbar = () => (
  <div className="h-[62px] shrink-0 border-t-[3px] border-black bg-[#1c1c1c] flex items-center font-['Noto_Sans',sans-serif] text-white">
    <div className="w-[410px] h-full flex items-center shrink-0 relative">
      <svg width="26" height="28" viewBox="0 0 26 28" className="ml-[24px] mt-[8px] shrink-0">
        <path d="M1 14C3 5 8 3 13 3s10 2 12 11c-3-2-5-2-6 0-2-2-4-2-6 0-2-2-4-2-6 0-1-2-3-2-6 0z" fill="#5bb8f0" />
        <path d="M13 14v10c0 4-5 4-5 0" stroke="#aaa" strokeWidth="1.500" fill="none" />
      </svg>
      <div className="absolute left-[39px] top-[5px] w-[20px] h-[20px] rounded-full bg-[#c42b1c] flex items-center justify-center text-[13px]">1</div>
      <div className="ml-[14px] -mt-[2px] flex flex-col">
        <span className="text-[14.5px] leading-[20px]">2 cm of rain</span>
        <span className="text-[14.5px] leading-[20px] text-[#cfcfcf]">Sunday</span>
      </div>
    </div>
    <div className="w-[55px] h-full flex items-center justify-center shrink-0 pt-[3px]">
      <WinLogo />
    </div>
    <div className="ml-[5px] w-[272px] h-[38px] mt-[3px] rounded-full bg-[#f6f6f6] flex items-center pl-[14px] shrink-0">
      <Search className="w-[19px] h-[19px] text-[#222]" strokeWidth={2.2} />
      <span className="ml-[13px] text-[16px] text-[#555]">Search</span>
      <Globe />
    </div>
    <div className="ml-[4px] h-full flex shrink-0">
      {appIcons.map((a) => (
        <Cell key={a.key} dot={a.dot}>
          {a.node}
        </Cell>
      ))}
      <Cell active>
        <div className="absolute left-[7px] top-[5px] w-[49px] h-[49px] rounded-[5px] bg-[#2e2e2e] border border-[#333]" />
        <div className="relative">
          <FusionLogo size={29} />
        </div>
      </Cell>
    </div>
    <div className="ml-auto h-full flex items-center pr-[23px] pt-[1px] shrink-0">
      <div className="w-[40px] flex justify-center">
        <ChevronUp className="w-[20px] h-[20px]" strokeWidth={2.5} />
      </div>
      <div className="w-[40px] flex justify-center">
        <svg width="21" height="22" viewBox="0 0 21 22" fill="none" stroke="#e8e8e8" strokeWidth="1.300">
          <path d="M2 9c1-5 5-8 9-8 3 0 5 1 7 3M18 1v4h-4" />
          <path d="M2 13c1 5 4 8 8 8M2 21v-5h4" />
          <circle cx="14.500" cy="15" r="5" fill="#f59a0a" stroke="none" />
        </svg>
      </div>
      <div className="w-[41px] flex justify-center">
        <svg width="21" height="19" viewBox="0 0 21 19">
          <path d="M4 16a4 4 0 0 1 0-8c1-4 4-6 7-6 3 0 5 2 6 5a4.500 4.500 0 0 1 0 9z" fill="#777" />
          <path d="M3 1l16 17" stroke="#eee" strokeWidth="1.500" />
        </svg>
      </div>
      <div className="w-[55px] flex flex-col items-center text-[14.5px] leading-[21px]">
        <span>ENG</span>
        <span>IN</span>
      </div>
      <div className="ml-[5px] w-[30px] flex justify-center">
        <Wifi className="w-[21px] h-[21px]" strokeWidth={2} />
      </div>
      <div className="w-[28px] flex justify-center">
        <Volume1 className="w-[21px] h-[21px]" strokeWidth={1.5} />
      </div>
      <div className="w-[32px] flex justify-center">
        <svg width="21" height="18" viewBox="0 0 21 18" fill="none" stroke="#eee" strokeWidth="1.300">
          <path d="M4 6h13a2 2 0 0 1 2 2v7a2 2 0 0 1-2 2H4a2 2 0 0 1-2-2V8a2 2 0 0 1 2-2z" />
          <path d="M19 9h2v5h-2z" fill="#eee" />
          <path d="M5 0L3 6h4L4 11" />
        </svg>
      </div>
      <div className="w-[91px] flex flex-col items-end text-[14.8px] leading-[21px]">
        <span>13:53</span>
        <span>11-07-2025</span>
      </div>
    </div>
  </div>
);

export default function App() {
  return (
    <div className="w-[1919px] h-[1079px] flex flex-col overflow-hidden bg-white font-['Liberation_Sans',Arial,sans-serif]">
      <TitleBar />
      <DocBand />
      <Ribbon />
      <main className="relative flex-1 overflow-hidden">
        <Scene />
        <BrowserPanel />
        <ExportDialog />
        <ViewCube />
        <NavBar />
        <div className="absolute left-[5px] top-[748px] w-[375px] h-[31px] bg-[#f0f0f0] border-x-2 border-t border-[#d4d4d4] shadow-[0_1px_0_#000] flex items-center pl-[31px] pr-[15px] text-[13px] text-[#666]">
          COMMENTS
          <div className="ml-auto w-[11px] h-[11px] rounded-full bg-[#333] flex items-center justify-center text-[10px] leading-none text-white">+</div>
        </div>
        <svg width="20" height="21" viewBox="0 0 20 21" className="absolute left-[1885px] top-[756px]">
          <path d="M10 0c6 0 10 4 10 10v11H10C4 21 0 16 0 10S4 0 10 0z" fill="#000" />
          <path d="M5 14l10-8M7 15l8-6M10 15l5-4" stroke="#ccc" strokeWidth="1.300" />
        </svg>
      </main>
      <Timeline />
      <Taskbar />
    </div>
  );
}
